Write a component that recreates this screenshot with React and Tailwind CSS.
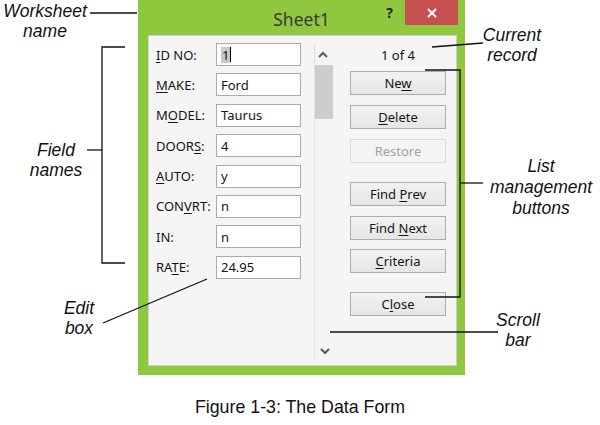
import { X } from 'lucide-react';

const fields = [
  { label: ['', 'I', 'D NO:'], value: '1', selected: true },
  { label: ['', 'M', 'AKE:'], value: 'Ford' },
  { label: ['M', 'O', 'DEL:'], value: 'Taurus' },
  { label: ['DOOR', 'S', ':'], value: '4' },
  { label: ['', 'A', 'UTO:'], value: 'y' },
  { label: ['CON', 'V', 'RT:'], value: 'n' },
  { label: ['IN:', '', ''], value: 'n' },
  { label: ['RA', 'T', 'E:'], value: '24.95' },
];

const buttons = [
  { text: ['Ne', 'w', ''], gap: 'mt-[8px]' },
  { text: ['', 'D', 'elete'], gap: 'mt-[10px]' },
  { text: ['Restore', '', ''], gap: 'mt-[10px]', disabled: true },
  { text: ['Find ', 'P', 'rev'], gap: 'mt-[19px]' },
  { text: ['Find ', 'N', 'ext'], gap: 'mt-[10px]' },
  { text: ['', 'C', 'riteria'], gap: 'mt-[9px]' },
  { text: ['C', 'l', 'ose'], gap: 'mt-[19px]' },
];

function Keyed({ parts }) {
  const [a, k, b] = parts;
  return (
    <>
      {a}
      {k && <span className="underline underline-offset-2">{k}</span>}
      {b}
    </>
  );
}

function Chevron({ up }) {
  return (
    <svg width="10" height="7" viewBox="0 0 10 7">
      <polyline
        points={up ? '1,6 5,2 9,6' : '1,1 5,5 9,1'}
        fill="none"
        stroke="#5a5a5a"
        strokeWidth="2"
      />
    </svg>
  );
}

function DataForm() {
  return (
    <div className="ml-[138px] flex h-[375px] w-[327px] flex-col bg-[#8fc73f] font-['Noto_Sans','Open_Sans',sans-serif]">
      {/* title bar */}
      <div className="grid h-[35px] grid-cols-[1fr_auto_1fr]">
        <div />
        <div className="pt-[7px] text-[17.5px] leading-[24px] text-[#3a3a3a]">Sheet1</div>
        <div className="flex justify-end">
          <span className="mr-[12px] pt-[4px] text-[14px] font-bold leading-[18px] text-[#222]">?</span>
          <div className="mr-[7px] flex h-[25px] w-[53px] items-center justify-center bg-[#c75050]">
            <X size={14} strokeWidth={3.2} className="text-white" />
          </div>
        </div>
      </div>

      {/* body */}
      <div className="ml-[10px] mr-[8px] flex h-[331px] border border-[#cfcfcf] bg-[#f5f5f5] text-[13px] text-[#141414]">
        {/* fields */}
        <div className="flex flex-col gap-[7.4px] pl-[7px] pt-[7px]">
          {fields.map((f, i) => (
            <div key={i} className="flex h-[23px] items-center">
              <span className="w-[60px] leading-[16px]">
                <Keyed parts={f.label} />
              </span>
              <div className="flex h-[23px] w-[85px] items-center border border-[#ababab] bg-white pl-[4px]">
                {f.selected ? (
                  <>
                    <span className="bg-[#c9c9c9] px-[1px] leading-[16px]">{f.value}</span>
                    <span className="h-[15px] w-[1px] bg-black" />
                  </>
                ) : (
                  <span className="leading-[16px]">{f.value}</span>
                )}
              </div>
            </div>
          ))}
        </div>

        {/* scroll bar */}
        <div className="mb-[4px] ml-[13px] mt-[7px] flex w-[22px] flex-col border-l border-[#e2e2e2]">
          <div className="ml-[3px] mt-[8px] flex h-[7px]">
            <Chevron up />
          </div>
          <div className="mt-[7px] h-[54px] w-[18px] bg-[#cdcdcd]" />
          <div className="flex-1" />
          <div className="mb-[6px] ml-[5px] flex h-[7px]">
            <Chevron />
          </div>
        </div>

        {/* buttons */}
        <div className="ml-[14px] flex w-[96px] flex-col pt-[11px]">
          <div className="text-center leading-[16px]">1 of 4</div>
          {buttons.map((b, i) => (
            <div
              key={i}
              className={`${b.gap} flex h-[24px] items-center justify-center border ${
                b.disabled
                  ? 'border-[#dadada] bg-[#f4f4f4] text-[#a3a3a3]'
                  : 'border-[#adadad] bg-gradient-to-b from-[#f2f2f2] to-[#e6e6e6]'
              }`}
            >
              <span className="leading-[16px]">
                <Keyed parts={b.text} />
              </span>
            </div>
          ))}
        </div>
      </div>
    </div>
  );
}

function Callout({ className, lines }) {
  return (
    <div className={`absolute text-center text-[17.5px] italic leading-[20px] text-[#111] ${className}`}>
      {lines.map((l) => (
        <div key={l}>{l}</div>
      ))}
    </div>
  );
}

export default function App() {
  return (
    <div className="relative h-[425px] w-[600px] overflow-hidden bg-white font-['Liberation_Sans',Arial,sans-serif]">
      <DataForm />

      <div className="mt-[21px] text-center text-[17.8px] leading-[22px] text-[#111]">
        Figure 1-3: The Data Form
      </div>

      {/* leader lines */}
      <svg className="absolute left-0 top-0" width="600" height="425" viewBox="0 0 600 425">
        <g stroke="#111" strokeWidth="1.3" fill="none">
          <line x1="90" y1="13" x2="137" y2="13" />
          <polyline points="125,47 102,47 102,263 125,263" />
          <line x1="87" y1="150" x2="102" y2="150" />
          <line x1="103" y1="323" x2="207" y2="279" />
          <line x1="432" y1="47" x2="483" y2="43" />
          <polyline points="425,70 460,70 460,297 425,297" />
          <line x1="460" y1="183" x2="483" y2="183" />
          <line x1="330" y1="332" x2="498" y2="332" />
        </g>
      </svg>

      <Callout className="left-0 top-[1px] w-[90px]" lines={['Worksheet', 'name']} />
      <Callout className="left-[26px] top-[140px] w-[60px]" lines={['Field', 'names']} />
      <Callout className="left-[55px] top-[298px] w-[48px]" lines={['Edit', 'box']} />
      <Callout className="left-[480px] top-[25px] w-[64px]" lines={['Current', 'record']} />
      <Callout className="left-[486px] top-[156px] w-[110px] leading-[21px]" lines={['List', 'management', 'buttons']} />
      <Callout className="left-[490px] top-[310px] w-[56px]" lines={['Scroll', 'bar']} />
    </div>
  );
}
